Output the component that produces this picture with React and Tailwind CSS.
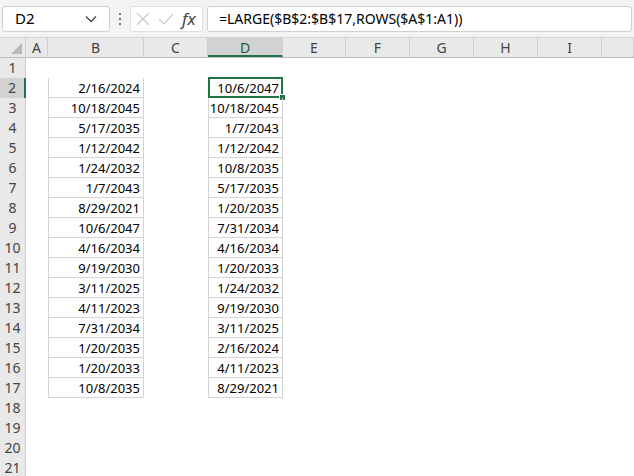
const B = ["2/16/2024","10/18/2045","5/17/2035","1/12/2042","1/24/2032","1/7/2043","8/29/2021","10/6/2047","4/16/2034","9/19/2030","3/11/2025","4/11/2023","7/31/2034","1/20/2035","1/20/2033","10/8/2035"];
const D = ["10/6/2047","10/18/2045","1/7/2043","1/12/2042","10/8/2035","5/17/2035","1/20/2035","7/31/2034","4/16/2034","1/20/2033","1/24/2032","9/19/2030","3/11/2025","2/16/2024","4/11/2023","8/29/2021"];
const cols = ["A","B","C","D","E","F","G","H","I",""];
const widths = ["w-[22px]","w-[96px]","w-[64px]","w-[75px]","w-[63px]","w-[64px]","w-[64px]","w-[64px]","w-[64px]","flex-1"];

function Cell({ i, r }) {
  const w = widths[i];
  let text = "";
  let cls = "";
  if (r >= 2 && r <= 17) {
    if (i === 1) { text = B[r - 2]; cls = "border-r border-b border-l border-[#d4d4d4]"; }
    if (i === 3) { text = D[r - 2]; cls = "border-r border-b border-l border-[#d4d4d4]"; }
  }
  const sel = i === 3 && r === 2;
  return (
    <div className={`${w} h-5 shrink-0 relative text-right pr-[3px] text-[13px] leading-5 text-black whitespace-nowrap ${cls}`}>
      {text}
      {sel && (
        <div className="absolute -left-px -top-px -right-px -bottom-px border-2 border-[#217346]">
          <div className="absolute -right-[5px] -bottom-[5px] w-[7px] h-[7px] bg-[#217346] border border-white" />
        </div>
      )}
    </div>
  );
}

export default function App() {
  return (
    <div className="w-[634px] h-[476px] overflow-hidden bg-white font-['Segoe_UI','Liberation_Sans',sans-serif] text-black">
      <div className="h-[38px] bg-[#f3f3f3] flex items-center gap-0 px-[2px] border-b border-[#d4d4d4]">
        <div className="w-[108px] h-[26px] bg-white border border-[#d0d0d0] rounded-[3px] flex items-center justify-between px-[12px] text-[15px]">
          <span>D2</span>
          <svg width="12" height="8" viewBox="0 0 12 8"><path d="M1 1.5l5 5 5-5" fill="none" stroke="#444" strokeWidth="1.3" /></svg>
        </div>
        <div className="w-[20px] flex flex-col items-center gap-[3px]">
          <span className="w-[2px] h-[2px] bg-[#777]" /><span className="w-[2px] h-[2px] bg-[#777]" /><span className="w-[2px] h-[2px] bg-[#777]" />
        </div>
        <div className="w-[73px] h-[26px] bg-white border border-[#e0e0e0] rounded-[3px] flex items-center gap-[8px] px-[5px]">
          <svg width="14" height="14" viewBox="0 0 14 14"><path d="M1 1l12 12M13 1L1 13" stroke="#c8c8c8" strokeWidth="1.2" /></svg>
          <svg width="16" height="12" viewBox="0 0 16 12"><path d="M1 6l5 5L15 1" fill="none" stroke="#c8c8c8" strokeWidth="1.2" /></svg>
          <span className="font-['Liberation_Serif',serif] italic text-[17px] text-[#444]">fx</span>
        </div>
        <div className="ml-[4px] flex-1 h-[26px] bg-white border border-[#d0d0d0] rounded-[3px] flex items-center px-[11px] text-[14px]">
          =LARGE($B$2:$B$17,ROWS($A$1:A1))
        </div>
      </div>
      <div className="flex h-5 bg-[#e9e9e9] border-b border-[#bdbdbd] text-[14px] text-[#444]">
        <div className="w-[26px] shrink-0 relative border-r border-[#d0d0d0]">
          <svg className="absolute right-[3px] bottom-[3px]" width="11" height="11" viewBox="0 0 11 11"><path d="M11 0V11H0z" fill="#b8b8b8" /></svg>
        </div>
        {cols.map((c, i) => (
          <div key={i} className={`${widths[i]} shrink-0 text-center leading-5 border-r border-[#d0d0d0] ${i === 3 ? "bg-[#d2d2d2] border-b-2 border-b-[#217346] text-[#1d5c3a]" : ""}`}>{c}</div>
        ))}
      </div>
      {Array.from({ length: 21 }, (_, k) => k + 1).map((r) => (
        <div key={r} className="flex h-5">
          <div className={`w-[26px] shrink-0 text-center leading-5 text-[14px] text-[#444] border-r border-[#d0d0d0] ${r === 2 ? "bg-[#d2d2d2] border-r-2 border-r-[#217346] text-[#1d5c3a]" : "bg-[#e9e9e9]"}`}>{r}</div>
          {cols.map((_, i) => <Cell key={i} i={i} r={r} />)}
        </div>
      ))}
    </div>
  );
}
